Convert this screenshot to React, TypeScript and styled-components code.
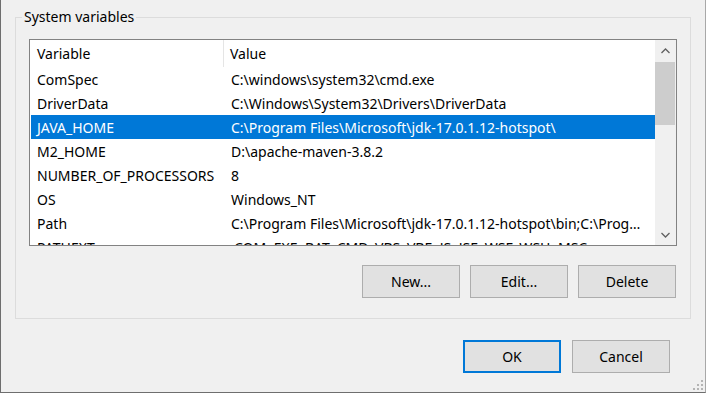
import React from "react";
import styled, { createGlobalStyle } from "styled-components";

const GlobalStyle = createGlobalStyle`
  html, body {
    margin: 0;
    padding: 0;
    background: #f0f0f0;
  }
  * {
    box-sizing: border-box;
  }
`;

const Window = styled.div`
  width: 706px;
  height: 393px;
  background: #f0f0f0;
  border-left: 1px solid #6e6e6e;
  border-right: 1px solid #a8a8a8;
  border-bottom: 1px solid #6e6e6e;
  font-family: "Noto Sans", "Open Sans", sans-serif;
  font-size: 14px;
  color: #000;
  display: flex;
  flex-direction: column;
  position: relative;
  overflow: hidden;
`;

const Group = styled.fieldset`
  margin: 7px 14px 0 14px;
  padding: 12px 13px 20px 13px;
  border: 1px solid #dcdcdc;
  min-width: 0;
`;

const Legend = styled.legend`
  margin-left: -7px;
  padding: 0 2px;
  line-height: 20px;
  font-size: 14px;
`;

const ListBox = styled.div`
  height: 207px;
  border: 1px solid #828282;
  background: #fff;
  display: flex;
  overflow: hidden;
`;

const Rows = styled.div`
  flex: 1;
  min-width: 0;
  display: flex;
  flex-direction: column;
  overflow: hidden;
`;

const HeaderRow = styled.div`
  display: flex;
  flex: none;
  height: 27px;
  align-items: center;
`;

const HeaderCell = styled.div<{ $w?: number; $divider?: boolean }>`
  ${(p) => (p.$w ? `width: ${p.$w}px; flex: none;` : "flex: 1;")}
  height: 100%;
  display: flex;
  align-items: center;
  padding-left: ${(p) => (p.$divider ? 7 : 6)}px;
  border-right: ${(p) => (p.$divider ? "1px solid #e5e5e5" : "none")};
`;

const Row = styled.div<{ $selected?: boolean }>`
  display: flex;
  flex: none;
  height: 24px;
  align-items: center;
  margin-left: 1px;
  background: ${(p) => (p.$selected ? "#0078d7" : "transparent")};
  color: ${(p) => (p.$selected ? "#fff" : "#000")};
`;

const Cell = styled.div<{ $w?: number }>`
  ${(p) => (p.$w ? `width: ${p.$w}px; flex: none; padding-left: 6px;` : "flex: 1; min-width: 0; padding: 0 11px 0 7px;")}
  white-space: nowrap;
  overflow: hidden;
  text-overflow: ellipsis;
`;

const ScrollBar = styled.div`
  width: 21px;
  flex: none;
  background: #f0f0f0;
  display: flex;
  flex-direction: column;
`;

const Arrow = styled.div`
  height: 21px;
  flex: none;
  display: flex;
  align-items: center;
  justify-content: center;
`;

const Track = styled.div`
  flex: 1;
  padding: 1px 1px 0 0;
`;

const Thumb = styled.div`
  height: 63px;
  background: #cdcdcd;
`;

const ButtonRow = styled.div<{ $gap: number }>`
  display: flex;
  justify-content: flex-end;
  gap: ${(p) => p.$gap}px;
`;

const GroupButtons = styled(ButtonRow)`
  margin-top: 19px;
  padding-right: 1px;
`;

const DialogButtons = styled(ButtonRow)`
  margin-top: 21px;
  padding-right: 35px;
`;

const Button = styled.button<{ $default?: boolean }>`
  width: 98px;
  height: 33px;
  background: #e1e1e1;
  border: ${(p) => (p.$default ? "2px solid #0078d7" : "1px solid #adadad")};
  font-family: inherit;
  font-size: 14px;
  color: #000;
  padding: 0;
  margin: 0;
`;

const Grip = styled.svg`
  position: absolute;
  right: 2px;
  bottom: 2px;
`;

const Chevron = ({ up }: { up?: boolean }) => (
  <svg width="9" height="6" viewBox="0 0 9 6">
    <path
      d={up ? "M0.5 5 L4.5 1 L8.5 5" : "M0.5 1 L4.5 5 L8.5 1"}
      fill="none"
      stroke="#606060"
      strokeWidth="1.3"
    />
  </svg>
);

const vars: [string, string][] = [
  ["ComSpec", "C:\\windows\\system32\\cmd.exe"],
  ["DriverData", "C:\\Windows\\System32\\Drivers\\DriverData"],
  ["JAVA_HOME", "C:\\Program Files\\Microsoft\\jdk-17.0.1.12-hotspot\\"],
  ["M2_HOME", "D:\\apache-maven-3.8.2"],
  ["NUMBER_OF_PROCESSORS", "8"],
  ["OS", "Windows_NT"],
  [
    "Path",
    "C:\\Program Files\\Microsoft\\jdk-17.0.1.12-hotspot\\bin;C:\\Program Files\\Common Files\\Oracle\\Java\\javapath;C:\\windows\\system32",
  ],
  ["PATHEXT", ".COM;.EXE;.BAT;.CMD;.VBS;.VBE;.JS;.JSE;.WSF;.WSH;.MSC"],
];

export default function App(): JSX.Element {
  return (
    <>
      <GlobalStyle />
      <Window>
        <Group>
          <Legend>System variables</Legend>
          <ListBox>
            <Rows>
              <HeaderRow>
                <HeaderCell $w={194} $divider>
                  Variable
                </HeaderCell>
                <HeaderCell>Value</HeaderCell>
              </HeaderRow>
              {vars.map(([name, value]) => (
                <Row key={name} $selected={name === "JAVA_HOME"}>
                  <Cell $w={193}>{name}</Cell>
                  <Cell>{value}</Cell>
                </Row>
              ))}
            </Rows>
            <ScrollBar>
              <Arrow>
                <Chevron up />
              </Arrow>
              <Track>
                <Thumb />
              </Track>
              <Arrow>
                <Chevron />
              </Arrow>
            </ScrollBar>
          </ListBox>
          <GroupButtons $gap={10}>
            <Button>New...</Button>
            <Button>Edit...</Button>
            <Button>Delete</Button>
          </GroupButtons>
        </Group>
        <DialogButtons $gap={11}>
          <Button $default>OK</Button>
          <Button>Cancel</Button>
        </DialogButtons>
        <Grip width="10" height="10" viewBox="0 0 10 10">
          {[
            [8, 0],
            [4, 4],
            [8, 4],
            [0, 8],
            [4, 8],
            [8, 8],
          ].map(([x, y]) => (
            <rect key={`${x}-${y}`} x={x} y={y} width="2" height="2" fill="#b4b4b4" />
          ))}
        </Grip>
      </Window>
    </>
  );
}
